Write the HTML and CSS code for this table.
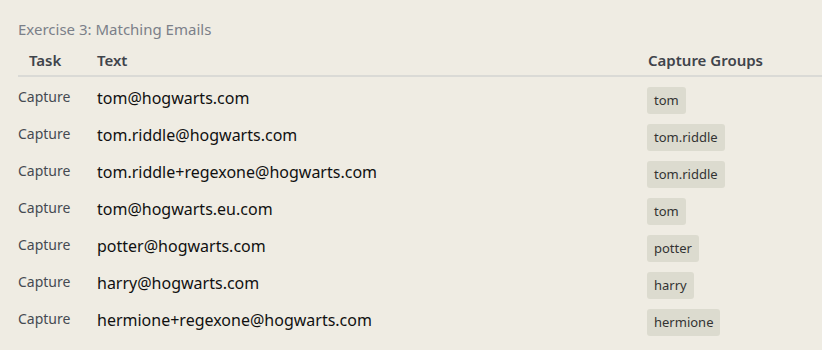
FILE: index.html
```html
<!DOCTYPE html>
<html>
<head>
<meta charset="utf-8">
<link rel="stylesheet" href="styles.css">
</head>
<body>
<div class="exercise">
  <div class="title">Exercise 3: Matching Emails</div>
  <div class="table">
    <div class="row head">
      <div class="c-task"><span class="th-task">Task</span></div>
      <div class="c-text">Text</div>
      <div class="c-groups">Capture Groups</div>
    </div>
    <div class="body">
      <div class="row"><div class="c-task">Capture</div><div class="c-text">tom@hogwarts.com</div><div class="c-groups"><span class="badge">tom</span></div></div>
      <div class="row"><div class="c-task">Capture</div><div class="c-text">tom.riddle@hogwarts.com</div><div class="c-groups"><span class="badge">tom.riddle</span></div></div>
      <div class="row"><div class="c-task">Capture</div><div class="c-text">tom.riddle+regexone@hogwarts.com</div><div class="c-groups"><span class="badge">tom.riddle</span></div></div>
      <div class="row"><div class="c-task">Capture</div><div class="c-text">tom@hogwarts.eu.com</div><div class="c-groups"><span class="badge">tom</span></div></div>
      <div class="row"><div class="c-task">Capture</div><div class="c-text">potter@hogwarts.com</div><div class="c-groups"><span class="badge">potter</span></div></div>
      <div class="row"><div class="c-task">Capture</div><div class="c-text">harry@hogwarts.com</div><div class="c-groups"><span class="badge">harry</span></div></div>
      <div class="row"><div class="c-task">Capture</div><div class="c-text">hermione+regexone@hogwarts.com</div><div class="c-groups"><span class="badge">hermione</span></div></div>
    </div>
  </div>
</div>
</body>
</html>
```

FILE: styles.css
```css
html, body {
  margin: 0;
  padding: 0;
  background: #efece3;
}
body {
  font-family: "Noto Sans", "Open Sans", sans-serif;
  color: #222;
}
.exercise {
  padding: 18px 0 0 18px;
}
.title {
  font-size: 15px;
  line-height: 22px;
  color: #7b8089;
  margin-bottom: 7px;
}
.row {
  display: grid;
  grid-template-columns: 79px 550px 1fr;
  align-items: center;
  height: 37px;
}
.row.head {
  height: 28px;
  border-bottom: 2px solid #dadad6;
  font-weight: 600;
  font-size: 15px;
  color: #3f444b;
  align-items: start;
  line-height: 22px;
  padding-top: 2px;
  box-sizing: border-box;
  height: 30px;
}
.th-task {
  padding-left: 11px;
}
.c-groups {
  padding-left: 1px;
}
.body {
  padding-top: 5px;
}
.c-task {
  white-space: nowrap;
}
.body .c-task {
  font-size: 14px;
  color: #454a52;
  padding-bottom: 8px;
}
.body .c-text {
  font-size: 16px;
  color: #111;
  padding-bottom: 5px;
}
.body .c-groups {
  padding-left: 0;
  display: flex;
}
.badge {
  display: inline-block;
  background: #dcdbcf;
  color: #333;
  font-size: 13px;
  line-height: 27px;
  height: 27px;
  padding: 0 7px;
  border-radius: 3px;
}
```
